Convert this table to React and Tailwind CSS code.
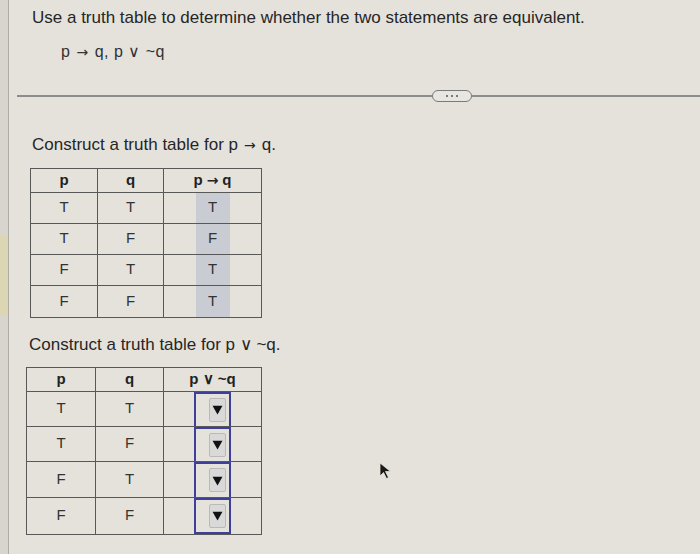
import React from 'react';

const font = { fontFamily: '"Liberation Sans", Arial, sans-serif' };

const rows = [
  ['T', 'T', 'T'],
  ['T', 'F', 'F'],
  ['F', 'T', 'T'],
  ['F', 'F', 'T'],
];

const Arrow = ({ wide }) => (
  <span
    className={`text-[14px] ${wide ? 'mx-[6px]' : 'mx-[4px]'}`}
    style={{ fontFamily: '"DejaVu Sans", sans-serif' }}
  >
    →
  </span>
);

function Dropdown({ last }) {
  return (
    <div
      className={`mx-auto flex h-full w-[37px] items-center justify-end border-x-2 border-t-2 border-[#3d3f9a] pr-[3px] ${last ? 'border-b-2' : ''}`}
    >
      <div className="flex h-[24px] w-[17px] items-center justify-center rounded-[2px] border border-[#b9b9b9] bg-[#d9d9d9]">
        <svg width="11" height="11" viewBox="0 0 10 10">
          <path d="M0.5 1.5 L9.5 1.5 L5 9.5 Z" fill="#111" />
        </svg>
      </div>
    </div>
  );
}

function TruthTable({ head, widths, headH, rowHs, shade, dropdown, className }) {
  return (
    <table className={`border-collapse text-[15px] text-[#333] ${className}`}>
      <thead>
        <tr style={{ height: headH }}>
          {head.map((h, i) => (
            <th key={i} style={{ width: widths[i] }} className="border-[1.5px] border-[#585858] p-0 text-center font-bold text-[#222]">
              {h}
            </th>
          ))}
        </tr>
      </thead>
      <tbody>
        {rows.map((r, i) => (
          <tr key={i} style={{ height: rowHs[i] }}>
            <td className="border-[1.5px] border-[#585858] p-0 text-center">{r[0]}</td>
            <td className="border-[1.5px] border-[#585858] p-0 text-center">{r[1]}</td>
            <td className="h-px border-[1.5px] border-[#585858] p-0 text-center">
              {dropdown ? (
                <Dropdown last={i === rows.length - 1} />
              ) : shade ? (
                <div className="mx-auto flex h-full w-[34px] items-center justify-center bg-[#c9ccd3]">{r[2]}</div>
              ) : (
                r[2]
              )}
            </td>
          </tr>
        ))}
      </tbody>
    </table>
  );
}

export default function App() {
  return (
    <div className="flex h-[554px] w-[700px] overflow-hidden bg-[#e5e2dc]" style={font}>
      {/* left edge of the window */}
      <div className="flex w-[9px] flex-col border-r border-[#aeaba4] bg-[#d8d5ce]">
        <div className="mt-[236px] h-[80px] bg-[#ddd6b4]" />
      </div>

      <div className="relative flex-1 text-[#262626]">
        <p className="ml-[23px] mt-[9px] text-[17px] leading-[18px]">
          Use a truth table to determine whether the two statements are equivalent.
        </p>
        <p className="ml-[52px] mt-[16px] text-[16px] leading-[18px] tracking-[0.5px] text-[#333]">
          p<Arrow wide />q, p ∨ ~q
        </p>

        {/* divider with more button */}
        <div className="ml-[8px] mt-[29px] flex items-center">
          <div className="h-[1.5px] w-[415px] bg-[#8c8c8c]" />
          <div className="flex h-[12px] w-[40px] items-center justify-center gap-[3px] rounded-full border-[1.5px] border-[#7a7a7a] bg-[#e8e6e1]">
            <span className="h-[2px] w-[2px] rounded-full bg-[#555]" />
            <span className="h-[2px] w-[2px] rounded-full bg-[#555]" />
            <span className="h-[2px] w-[2px] rounded-full bg-[#555]" />
          </div>
          <div className="h-[1.5px] flex-1 bg-[#8c8c8c]" />
        </div>

        <p className="ml-[23px] mt-[34px] text-[17px] leading-[18px]">
          Construct a truth table for p<Arrow wide />q.
        </p>
        <TruthTable
          className="ml-[21px] mt-[14px]"
          head={['p', 'q', <span key="h">p<Arrow />q</span>]}
          widths={[67, 66, 98]}
          headH={23}
          rowHs={[31, 31, 31, 32]}
          shade
        />

        <p className="ml-[20px] mt-[18px] text-[17px] leading-[18px]">
          Construct a truth table for p ∨ ~q.
        </p>
        <TruthTable
          className="ml-[17px] mt-[13px]"
          head={['p', 'q', 'p ∨ ~q']}
          widths={[69, 68, 98]}
          headH={24}
          rowHs={[35, 35, 36, 37]}
          dropdown
        />

        {/* mouse pointer */}
        <svg className="absolute left-[370px] top-[462px]" width="14" height="18" viewBox="0 0 14 18">
          <path d="M1 1 L1 14 L4.5 10.5 L7.5 16.5 L9.5 15.5 L6.5 9.5 L11.5 9.5 Z" fill="#1a1a1a" stroke="#e5e2dc" strokeWidth="0.8" />
        </svg>
      </div>
    </div>
  );
}
